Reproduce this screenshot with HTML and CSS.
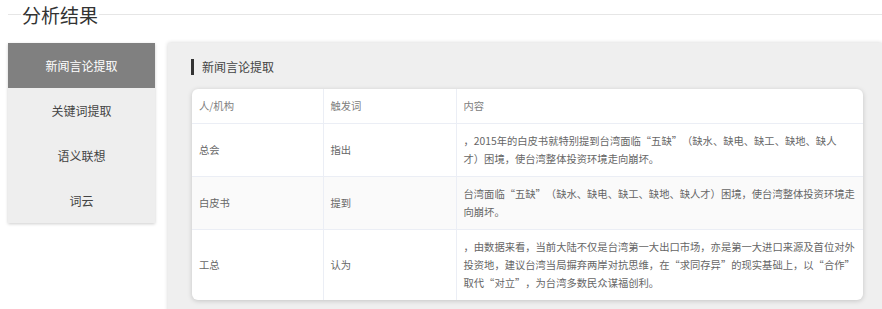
FILE: index.html
```html
<!DOCTYPE html>
<html lang="zh-CN">
<head>
  <meta charset="UTF-8" />
  <title>分析结果</title>
  <link rel="stylesheet" href="styles.css">
</head>
<body>
  <div class="page-title">
    <h2>分析结果</h2>
  </div>

  <div class="main">
    <ul class="side-menu">
      <li class="active">新闻言论提取</li>
      <li>关键词提取</li>
      <li>语义联想</li>
      <li>词云</li>
    </ul>

    <div class="panel">
      <h3 class="panel-title">新闻言论提取</h3>
      <div class="table-wrap">
        <table class="result-table">
          <colgroup>
            <col class="col-who">
            <col class="col-verb">
            <col>
          </colgroup>
          <thead>
            <tr>
              <th>人/机构</th>
              <th>触发词</th>
              <th>内容</th>
            </tr>
          </thead>
          <tbody>
            <tr>
              <td>总会</td>
              <td>指出</td>
              <td>，2015年的白皮书就特别提到台湾面临“五缺”（缺水、缺电、缺工、缺地、缺人才）困境，使台湾整体投资环境走向崩坏。</td>
            </tr>
            <tr class="striped">
              <td>白皮书</td>
              <td>提到</td>
              <td>台湾面临“五缺”（缺水、缺电、缺工、缺地、缺人才）困境，使台湾整体投资环境走向崩坏。</td>
            </tr>
            <tr>
              <td>工总</td>
              <td>认为</td>
              <td>，由数据来看，当前大陆不仅是台湾第一大出口市场，亦是第一大进口来源及首位对外投资地，建议台湾当局摒弃两岸对抗思维，在“求同存异”的现实基础上，以“合作”取代“对立”，为台湾多数民众谋福创利。</td>
            </tr>
          </tbody>
        </table>
      </div>
    </div>
  </div>
</body>
</html>
```

FILE: styles.css
```css
* {
  margin: 0;
  padding: 0;
  box-sizing: border-box;
}

body {
  font-family: "Noto Sans CJK SC", "Noto Sans", sans-serif;
  background: #fff;
  color: #606266;
  padding: 0 0 0 8px;
  overflow: hidden;
}

/* titre avec ligne */
.page-title {
  display: flex;
  align-items: center;
  height: 30px;
}

.page-title::before,
.page-title::after {
  content: "";
  height: 1px;
  background: #e6e6e6;
  margin-top: -2px;
}

.page-title::before {
  width: 13px;
}

.page-title::after {
  flex: 1;
}

.page-title h2 {
  font-size: 19px;
  font-weight: normal;
  color: #333;
  line-height: 30px;
  padding: 0 1px;
}

.main {
  display: flex;
  align-items: flex-start;
  gap: 13px;
  margin-top: 13px;
}

.side-menu {
  list-style: none;
  width: 147px;
  flex-shrink: 0;
  background: #eeeeee;
  box-shadow: 0 1px 3px rgba(0, 0, 0, 0.2);
}

.side-menu li {
  height: 45px;
  line-height: 45px;
  text-align: center;
  font-size: 12px;
  color: #444;
}

.side-menu li.active {
  background: #808080;
  color: #fff;
}

.panel {
  flex: 1;
  height: 280px;
  background: #efefef;
  box-shadow: 0 0 4px rgba(0, 0, 0, 0.18);
  padding: 16px 19px 0 24px;
}

.panel-title {
  font-size: 12px;
  font-weight: normal;
  color: #444;
  line-height: 16px;
  border-left: 3px solid #333;
  padding-left: 8px;
  margin-left: -1px;
  margin-bottom: 14px;
}

.table-wrap {
  background: #fff;
  border-radius: 6px;
  box-shadow: 0 1px 5px rgba(0, 0, 0, 0.18);
  overflow: hidden;
}

.result-table {
  width: 100%;
  border-collapse: collapse;
  table-layout: fixed;
  font-size: 10.3px;
  line-height: 18px;
  text-spacing-trim: space-all;
}

.col-who {
  width: 131px;
}

.col-verb {
  width: 133px;
}

.result-table th,
.result-table td {
  text-align: left;
  padding: 8px 6px 8px 7px;
  border-bottom: 1px solid #ebeef5;
  border-right: 1px solid #ebeef5;
  vertical-align: middle;
}

.result-table th:last-child,
.result-table td:last-child {
  border-right: none;
}

.result-table tbody tr:last-child td {
  border-bottom: none;
}

.result-table th {
  font-weight: normal;
  color: #808080;
}

.result-table td {
  color: #666;
}

.result-table tr.striped td {
  background: #fafafa;
}
```
